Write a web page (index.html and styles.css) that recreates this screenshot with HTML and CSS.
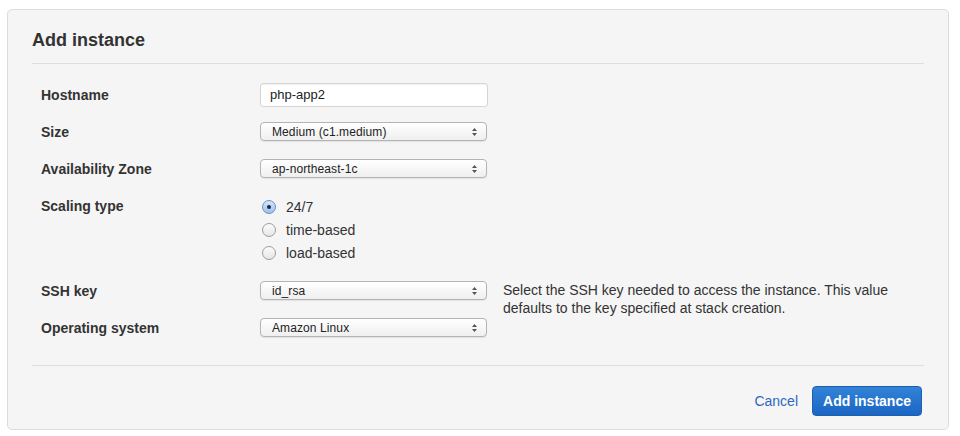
FILE: index.html
```html
<!DOCTYPE html>
<html lang="en">
<head>
  <meta charset="UTF-8" />
  <title>Add instance</title>
  <link rel="stylesheet" href="styles.css">
</head>
<body>
  <div class="panel">
    <div class="panel-header">
      <h2>Add instance</h2>
    </div>

    <div class="form">
      <div class="row row-host">
        <label>Hostname</label>
        <div class="text-input">php-app2</div>
      </div>

      <div class="row row-size">
        <label>Size</label>
        <div class="select">
          <span>Medium (c1.medium)</span>
          <svg width="7" height="10" viewBox="0 0 7 10"><path d="M3.5 1 L6 4 L1 4 Z M3.5 9 L6 6 L1 6 Z" fill="#555"/></svg>
        </div>
      </div>

      <div class="row row-zone">
        <label>Availability Zone</label>
        <div class="select">
          <span>ap-northeast-1c</span>
          <svg width="7" height="10" viewBox="0 0 7 10"><path d="M3.5 1 L6 4 L1 4 Z M3.5 9 L6 6 L1 6 Z" fill="#555"/></svg>
        </div>
      </div>

      <div class="row row-scaling">
        <label>Scaling type</label>
        <div class="radios">
          <div class="radio"><span class="dot checked"></span>24/7</div>
          <div class="radio"><span class="dot"></span>time-based</div>
          <div class="radio"><span class="dot"></span>load-based</div>
        </div>
      </div>

      <div class="key-group">
        <label class="key-label">SSH key</label>
        <div class="select key-select">
          <span>id_rsa</span>
          <svg width="7" height="10" viewBox="0 0 7 10"><path d="M3.5 1 L6 4 L1 4 Z M3.5 9 L6 6 L1 6 Z" fill="#555"/></svg>
        </div>
        <p class="help">Select the SSH key needed to access the instance. This value defaults to the key specified at stack creation.</p>
        <label class="os-label">Operating system</label>
        <div class="select os-select">
          <span>Amazon Linux</span>
          <svg width="7" height="10" viewBox="0 0 7 10"><path d="M3.5 1 L6 4 L1 4 Z M3.5 9 L6 6 L1 6 Z" fill="#555"/></svg>
        </div>
      </div>
    </div>

    <div class="footer">
      <a class="cancel" href="#">Cancel</a>
      <button class="primary">Add instance</button>
    </div>
  </div>
</body>
</html>
```

FILE: styles.css
```css
body {
  margin: 0;
  padding: 9px 11px 0 7px;
  background: #fff;
  font-family: "Liberation Sans", Arial, sans-serif;
  color: #333;
}

.panel {
  background: #f5f5f5;
  border: 1px solid #dcdcdc;
  border-radius: 5px;
  padding: 0 24px;
  height: 419px;
}

.panel-header {
  padding-top: 19px;
  padding-bottom: 12px;
  border-bottom: 1px solid #dedede;
}

.panel-header h2 {
  margin: 0;
  font-size: 18px;
  line-height: 22px;
  font-weight: bold;
  color: #333;
}

.form {
  padding: 19px 9px 0;
  height: 282px;
}

.row {
  display: flex;
  align-items: center;
}

.row label,
.key-group label {
  width: 219px;
  font-size: 14px;
  font-weight: bold;
  color: #333;
}

.row-host {
  height: 24px;
}

.row-size {
  height: 19px;
  margin-top: 15px;
}

.row-zone {
  height: 19px;
  margin-top: 18px;
}

.row-scaling {
  align-items: flex-start;
  margin-top: 17px;
}

.row-scaling label {
  line-height: 23px;
}

.text-input {
  width: 209px;
  height: 22px;
  padding: 0 8px 0 9px;
  background: #fff;
  border: 1px solid #d6d6d6;
  border-radius: 3px;
  box-shadow: inset 0 1px 1px rgba(0, 0, 0, 0.06);
  font-size: 13px;
  line-height: 22px;
  color: #222;
}

.select {
  width: 227px;
  height: 19px;
  box-sizing: border-box;
  display: flex;
  align-items: center;
  justify-content: space-between;
  padding: 0 8px 0 11px;
  background: linear-gradient(#ffffff, #efefef);
  border: 1px solid #b4b4b4;
  border-radius: 4px;
  box-shadow: 0 1px 1px rgba(0, 0, 0, 0.08);
  font-size: 12px;
  letter-spacing: 0.1px;
  color: #222;
}

.radios {
  display: flex;
  flex-direction: column;
}

.radio {
  display: flex;
  align-items: center;
  height: 23px;
  font-size: 14px;
  color: #333;
  padding-left: 2px;
}

.dot {
  width: 12px;
  height: 12px;
  border: 1px solid #9c9c9c;
  border-radius: 50%;
  background: linear-gradient(#fcfcfc, #e6e6e6);
  margin-right: 10px;
  display: flex;
  align-items: center;
  justify-content: center;
}

.dot.checked {
  border-color: #6e8fbf;
  background: linear-gradient(#d6e6fb, #9cc0ee);
}

.dot.checked::after {
  content: "";
  width: 4px;
  height: 4px;
  border-radius: 50%;
  background: #1b2a3c;
}

.key-group {
  display: grid;
  grid-template-columns: 219px 227px auto;
  grid-template-rows: 19px 19px;
  row-gap: 18px;
  align-items: center;
  margin-top: 17px;
}

.key-label { grid-row: 1; grid-column: 1; }
.key-select { grid-row: 1; grid-column: 2; }
.os-label { grid-row: 2; grid-column: 1; }
.os-select { grid-row: 2; grid-column: 2; }

.help {
  grid-row: 1 / span 2;
  grid-column: 3;
  align-self: start;
  margin: 0 0 0 16px;
  width: 405px;
  font-size: 14px;
  line-height: 18px;
  color: #333;
}

.footer {
  border-top: 1px solid #dedede;
  display: flex;
  justify-content: flex-end;
  align-items: center;
  gap: 14px;
  padding: 20px 2px 0 0;
}

.cancel {
  font-size: 14px;
  color: #2f68c0;
  text-decoration: none;
}

.primary {
  width: 110px;
  height: 30px;
  border: 1px solid #1c5eb0;
  border-radius: 4px;
  background: linear-gradient(#3283d8, #1b66c3);
  color: #fff;
  font-family: "Liberation Sans", Arial, sans-serif;
  font-size: 14px;
  font-weight: bold;
  cursor: pointer;
}
```
